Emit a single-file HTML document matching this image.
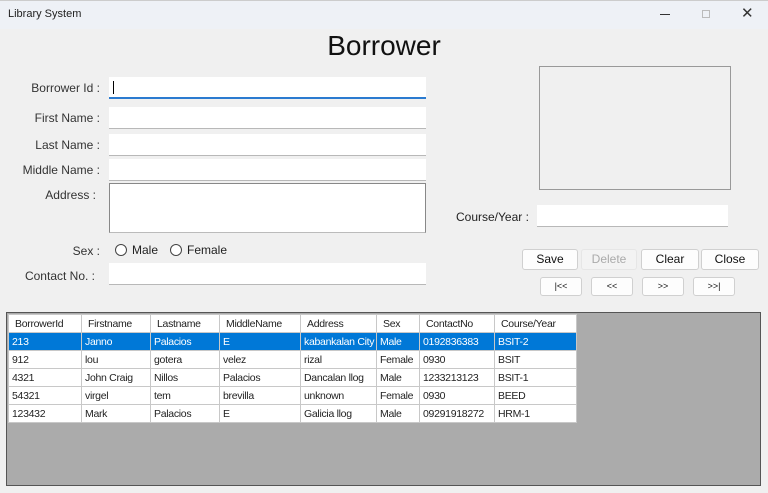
<!DOCTYPE html>
<html><head><meta charset="utf-8"><style>
*{box-sizing:border-box;margin:0;padding:0}
body{width:768px;height:493px;background:#f0f0f0;font-family:"Liberation Sans",sans-serif;font-size:12px;color:#222;position:relative;overflow:hidden}
.a{position:absolute}
.tb{left:0;top:0;width:768px;height:29px;background:#eef1f6;border-top:1px solid #ccc}
.lbl{text-align:right;width:100px;font-size:12px;color:#333}
.inp{background:#fff;border-bottom:1px solid #b8b8b8}
.btn{background:#fdfdfd;border:1px solid #d0d0d0;border-radius:3px;text-align:center;font-size:12px;line-height:19px;color:#111}
.nav{font-size:9px;line-height:17px}
table{border-collapse:collapse;table-layout:fixed;width:568px;font-family:"Liberation Sans",sans-serif;font-size:10.5px;letter-spacing:-0.3px}
td{border:1px solid #c8c8c8;height:18px;padding:0 3px;background:#fff;white-space:nowrap;overflow:hidden}
tr.h td{padding-left:6px}
tr.s td{background:#0078d7;color:#fff}
.rad{display:inline-block;width:12px;height:12px;border:1px solid #444;border-radius:50%;vertical-align:-2px;margin-right:5px;background:#fff}
</style></head><body>
<div class="a tb"></div>
<div class="a" style="left:8px;top:8px;font-size:11px">Library System</div>
<div class="a" style="left:660px;top:14px;width:10px;height:1px;background:#333"></div>
<div class="a" style="left:702px;top:10px;width:8px;height:8px;border:1px solid #bbb"></div>
<div class="a" style="left:741px;top:4px;font-size:15px;color:#333;font-family:'DejaVu Sans'">✕</div>
<div class="a" style="left:0;width:768px;top:30px;text-align:center;font-size:28px;color:#111">Borrower</div>

<div class="a lbl" style="left:0;top:81px">Borrower Id :</div>
<div class="a inp" style="left:109px;top:77px;width:317px;height:22px;border-bottom:2px solid #2b7bd0"></div>
<div class="a" style="left:113px;top:81px;width:1px;height:13px;background:#000"></div>
<div class="a lbl" style="left:0;top:111px">First Name :</div>
<div class="a inp" style="left:109px;top:107px;width:317px;height:22px"></div>
<div class="a lbl" style="left:0;top:138px">Last Name :</div>
<div class="a inp" style="left:109px;top:134px;width:317px;height:22px"></div>
<div class="a lbl" style="left:0;top:163px">Middle Name :</div>
<div class="a inp" style="left:109px;top:159px;width:317px;height:22px"></div>
<div class="a lbl" style="left:0;top:188px;width:96px">Address :</div>
<div class="a" style="left:109px;top:183px;width:317px;height:50px;background:#fff;border:1px solid #888;border-bottom-color:#bbb"></div>
<div class="a lbl" style="left:0;top:244px">Sex :</div>
<div class="a" style="left:115px;top:243px"><span class="rad"></span>Male</div>
<div class="a" style="left:170px;top:243px"><span class="rad"></span>Female</div>
<div class="a lbl" style="left:0;top:269px;width:95px">Contact No. :</div>
<div class="a inp" style="left:109px;top:263px;width:317px;height:22px"></div>

<div class="a" style="left:539px;top:66px;width:192px;height:124px;border:1px solid #999"></div>
<div class="a" style="left:456px;top:210px">Course/Year :</div>
<div class="a inp" style="left:537px;top:205px;width:191px;height:22px"></div>

<div class="a btn" style="left:522px;top:249px;width:56px;height:21px">Save</div>
<div class="a btn" style="left:581px;top:249px;width:56px;height:21px;color:#aaa;background:#f3f3f3;border-color:#e6e6e6">Delete</div>
<div class="a btn" style="left:641px;top:249px;width:58px;height:21px">Clear</div>
<div class="a btn" style="left:701px;top:249px;width:58px;height:21px">Close</div>
<div class="a btn nav" style="left:540px;top:277px;width:42px;height:19px">|&lt;&lt;</div>
<div class="a btn nav" style="left:591px;top:277px;width:42px;height:19px">&lt;&lt;</div>
<div class="a btn nav" style="left:642px;top:277px;width:42px;height:19px">&gt;&gt;</div>
<div class="a btn nav" style="left:693px;top:277px;width:42px;height:19px">&gt;&gt;|</div>

<div class="a" style="left:6px;top:312px;width:755px;height:174px;background:#ababab;border:1px solid #555">
<table style="position:absolute;left:1px;top:1px">
<colgroup><col style="width:73px"><col style="width:69px"><col style="width:69px"><col style="width:81px"><col style="width:76px"><col style="width:43px"><col style="width:75px"><col style="width:82px"></colgroup>
<tr class="h"><td>BorrowerId</td><td>Firstname</td><td>Lastname</td><td>MiddleName</td><td>Address</td><td>Sex</td><td>ContactNo</td><td>Course/Year</td></tr>
<tr class="s"><td>213</td><td>Janno</td><td>Palacios</td><td>E</td><td>kabankalan City</td><td>Male</td><td>0192836383</td><td>BSIT-2</td></tr>
<tr><td>912</td><td>lou</td><td>gotera</td><td>velez</td><td>rizal</td><td>Female</td><td>0930</td><td>BSIT</td></tr>
<tr><td>4321</td><td>John Craig</td><td>Nillos</td><td>Palacios</td><td>Dancalan llog</td><td>Male</td><td>1233213123</td><td>BSIT-1</td></tr>
<tr><td>54321</td><td>virgel</td><td>tem</td><td>brevilla</td><td>unknown</td><td>Female</td><td>0930</td><td>BEED</td></tr>
<tr><td>123432</td><td>Mark</td><td>Palacios</td><td>E</td><td>Galicia llog</td><td>Male</td><td>09291918272</td><td>HRM-1</td></tr>
</table></div>
</body></html>
